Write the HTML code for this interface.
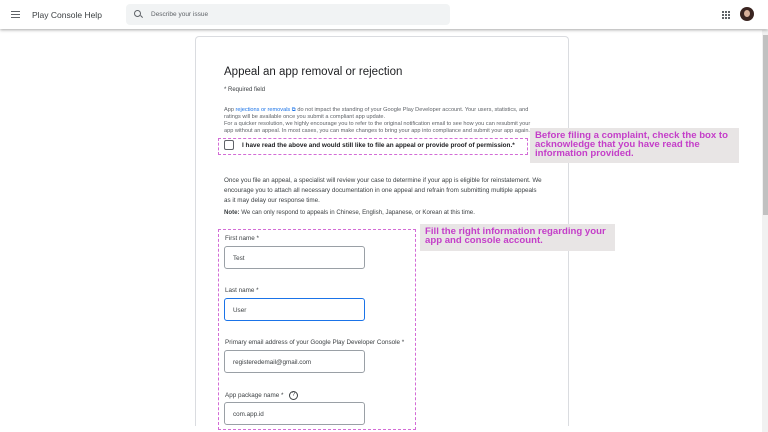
<!DOCTYPE html>
<html><head><style>
*{margin:0;padding:0;box-sizing:border-box}
html,body{width:768px;height:432px;overflow:hidden}
body{background:#fff;font-family:"Liberation Sans",sans-serif;color:#202124;position:relative}
.hdr{position:absolute;left:0;top:0;width:768px;height:29px;background:#fff;box-shadow:0 1px 3px rgba(0,0,0,.35);z-index:2}
.abs{position:absolute}
.card{position:absolute;left:195px;top:36px;width:374px;height:390px;border:1px solid #dadce0;border-bottom:none;border-radius:4px 4px 0 0}
.sm{font-size:5.6px;line-height:7px;color:#5f6368}
.lbl{font-size:6.3px;color:#3c4043}
.inp{position:absolute;left:224px;width:141px;height:23px;border:1px solid #9aa0a6;border-radius:3px;font-size:6.3px;padding:8px 0 0 8px;color:#3c4043}
.note{position:absolute;background:#e8e5e5;color:#c43ec9;font-weight:bold;font-size:9.6px;line-height:9px;padding:3px 5px}
</style></head><body>
<div class="hdr">
 <div class="abs" style="left:11px;top:14px;width:9px;height:1.2px;background:#5f6368;box-shadow:0 3px 0 #5f6368,0 -3px 0 #5f6368"></div>
 <div class="abs" style="left:32px;top:10px;font-size:8.5px;color:#3c4043">Play Console Help</div>
 <div class="abs" style="left:126px;top:4px;width:324px;height:21px;background:#f1f3f4;border-radius:4px"></div>
 <div class="abs" style="left:134px;top:10px;width:7px;height:7px;border:1.3px solid #5f6368;border-radius:50%"></div>
 <div class="abs" style="left:140px;top:16px;width:3px;height:1.3px;background:#5f6368;transform:rotate(45deg)"></div>
 <div class="abs" style="left:151px;top:11px;font-size:6.5px;color:#5f6368">Describe your issue</div>
 <svg class="abs" style="left:722px;top:11px" width="8" height="8" viewBox="0 0 8 8" fill="#5f6368"><rect x="0" y="0" width="2" height="2"/><rect x="3" y="0" width="2" height="2"/><rect x="6" y="0" width="2" height="2"/><rect x="0" y="3" width="2" height="2"/><rect x="3" y="3" width="2" height="2"/><rect x="6" y="3" width="2" height="2"/><rect x="0" y="6" width="2" height="2"/><rect x="3" y="6" width="2" height="2"/><rect x="6" y="6" width="2" height="2"/></svg>
 <div class="abs" style="left:740px;top:7px;width:14px;height:14px;border-radius:50%;background:#3a2420"></div>
 <div class="abs" style="left:744px;top:10px;width:6px;height:7px;border-radius:50%;background:#d8b09a"></div>
</div>
<div class="abs" style="left:762px;top:30px;width:6px;height:402px;background:#f1f1f1"></div>
<div class="abs" style="left:763px;top:35px;width:5px;height:180px;background:#c1c1c1"></div>
<div class="card"></div>
<div class="abs" style="left:224px;top:66px;font-size:11.5px;color:#202124">Appeal an app removal or rejection</div>
<div class="abs" style="left:224px;top:87px;font-size:6px;color:#3c4043">* Required field</div>
<div class="abs sm" style="left:224px;top:107px;width:310px">App <span style="color:#1a73e8">rejections or removals ⧉</span> do not impact the standing of your Google Play Developer account. Your users, statistics, and ratings will be available once you submit a compliant app update.<br>For a quicker resolution, we highly encourage you to refer to the original notification email to see how you can resubmit your app without an appeal. In most cases, you can make changes to bring your app into compliance and submit your app again.</div>
<div class="abs" style="left:218px;top:138px;width:310px;height:17px;border:1.3px dashed #d36bd6"></div>
<div class="abs" style="left:224px;top:140px;width:10px;height:10px;border:1.3px solid #5f6368;border-radius:2px"></div>
<div class="abs" style="left:242px;top:142px;font-size:6.4px;font-weight:bold;color:#202124">I have read the above and would still like to file an appeal or provide proof of permission.*</div>
<div class="abs" style="left:224px;top:176px;width:320px;font-size:6.3px;line-height:10px;color:#3c4043">Once you file an appeal, a specialist will review your case to determine if your app is eligible for reinstatement. We encourage you to attach all necessary documentation in one appeal and refrain from submitting multiple appeals as it may delay our response time.</div>
<div class="abs" style="left:224px;top:209px;font-size:6.1px;color:#3c4043"><b>Note:</b> We can only respond to appeals in Chinese, English, Japanese, or Korean at this time.</div>
<div class="note" style="left:530px;top:128px;width:209px;height:35px">Before filing a complaint, check the box to acknowledge that you have read the information provided.</div>
<div class="note" style="left:420px;top:224px;width:195px;height:27px">Fill the right information regarding your app and console account.</div>
<div class="abs" style="left:218px;top:229px;width:198px;height:201px;border:1.3px dashed #d36bd6"></div>
<div class="abs lbl" style="left:225px;top:235px">First name *</div>
<div class="inp" style="top:246px">Test</div>
<div class="abs lbl" style="left:225px;top:287px">Last name *</div>
<div class="inp" style="top:298px;border:1.5px solid #1a73e8">User</div>
<div class="abs lbl" style="left:225px;top:339px">Primary email address of your Google Play Developer Console *</div>
<div class="inp" style="top:350px">registeredemail@gmail.com</div>
<div class="abs lbl" style="left:225px;top:391px">App package name * <span style="display:inline-block;width:9px;height:9px;border:1px solid #3c4043;border-radius:50%;font-size:6px;text-align:center;line-height:7px;margin-left:4px;vertical-align:middle">?</span></div>
<div class="inp" style="top:402px">com.app.id</div>
</body></html>
